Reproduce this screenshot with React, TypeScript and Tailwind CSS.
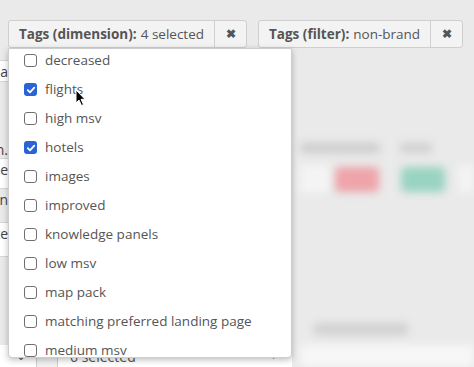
import React from "react";

const tags = [
  {label: "decreased", checked: false},
  {label: "flights", checked: true},
  {label: "high msv", checked: false},
  {label: "hotels", checked: true},
  {label: "images", checked: false},
  {label: "improved", checked: false},
  {label: "knowledge panels", checked: false},
  {label: "low msv", checked: false},
  {label: "map pack", checked: false},
  {label: "matching preferred landing page", checked: false},
  {label: "medium msv", checked: false},
  {label: "navigational", checked: false},
];

function Pill({name, value}: {name: string; value: string}) {
  return (
    <div className="flex h-[28px] items-stretch rounded-[3px] border border-[#cfcfcf] bg-[#f3f3f3] text-[13.5px] text-[#555]">
      <div className="flex items-center pl-[10px] pr-[10px] whitespace-nowrap">
        <span className="font-bold">{name}</span>
        <span className="ml-[4px]">{value}</span>
      </div>
      <div className="flex w-[32px] items-center justify-center border-l border-[#cfcfcf] text-[12px] font-bold">✖</div>
    </div>
  );
}

function Checkbox({checked}: {checked: boolean}) {
  if (checked) {
    return (
      <div className="flex h-[13px] w-[13px] items-center justify-center rounded-[3px] bg-[#2a63d6]">
        <svg width="10" height="10" viewBox="0 0 10 10">
          <path d="M1.8 5.2 L4 7.4 L8.3 2.6" fill="none" stroke="white" strokeWidth="1.8" strokeLinecap="round" strokeLinejoin="round"/>
        </svg>
      </div>
    );
  }
  return <div className="h-[13px] w-[13px] rounded-[3px] border border-[#6f6f6f] bg-white"/>;
}

function Edge({text, white}: {text: string; white?: boolean}) {
  return (
    <div className={`flex h-full w-[8px] justify-end overflow-hidden whitespace-nowrap text-[14px] text-[#444] ${white ? "bg-white" : ""}`}>
      <span>{text}</span>
    </div>
  );
}

export default function App() {
  return (
    <div className="relative h-[367px] w-[474px] overflow-hidden bg-[#eaeaea] font-['Open_Sans',sans-serif]">
      <div className="flex gap-[11px] px-[8px] pt-[20px]">
        <Pill name="Tags (dimension):" value="4 selected"/>
        <Pill name="Tags (filter):" value="non-brand"/>
      </div>

      <div className="flex h-[319px]">
        {/* form column underneath the menu */}
        <div className="flex w-[292px] flex-col">
          <div className="h-[12px]"/>
          <div className="flex h-[22px] items-center border-y border-[#d6d6d6] bg-white"><Edge text="a"/></div>
          <div className="h-[57px]"/>
          <div className="flex h-[20px] items-center border-b border-[#d6d6d6]"><Edge text="Domain."/></div>
          <div className="flex h-[30px] items-center border-b border-[#d6d6d6] bg-white"><Edge text="Type"/></div>
          <div className="flex h-[34px] items-center border-b border-[#d6d6d6]"><Edge text="Brown"/></div>
          <div className="flex h-[34px] items-center border-b border-[#d6d6d6] bg-white"><Edge text="Date"/></div>
          <div className="flex-1"/>
          <div className="flex h-[22px] items-center bg-white pl-[16px] text-[14px] text-[#555]">
            <span className="w-[20px] text-[12px]">⌄</span>
            <div className="h-[22px] w-[22px] border-x border-[#cfcfcf] bg-[#f1f1f1]"/>
            <span className="ml-[12px] flex-1">6 selected</span>
            <span className="mr-[14px] text-[9px]">▼</span>
          </div>
        </div>

        {/* blurred page content to the right */}
        <div className="flex flex-1 flex-col pl-[8px] blur-[4px]">
          <div className="h-[95px]"/>
          <div className="flex h-[10px] gap-[20px]">
            <div className="w-[80px] rounded-[3px] bg-[#cdcdcd]"/>
            <div className="w-[32px] rounded-[3px] bg-[#d0d0d0]"/>
          </div>
          <div className="mt-[12px] flex h-[28px] items-center gap-[5px]">
            <div className="h-full w-[30px] bg-[#f4f4f4]"/>
            <div className="h-[25px] w-[44px] rounded-[4px] bg-[#eea4a9]"/>
            <div className="w-[12px]"/>
            <div className="h-[25px] w-[44px] rounded-[4px] bg-[#99d3c1]"/>
            <div className="ml-[8px] h-full flex-1 bg-[#f4f4f4]"/>
          </div>
          <div className="h-[130px]"/>
          <div className="ml-[14px] h-[12px] w-[94px] rounded-[3px] bg-[#d1d1d1]"/>
          <div className="mt-[10px] flex-1 bg-[#f7f7f7]"/>
        </div>
      </div>

      {/* open tag menu */}
      <div className="absolute left-[8px] top-[48px] h-[310px] w-[284px] overflow-hidden rounded-b-[4px] border border-[#cdcdcd] bg-white shadow-[0_2px_6px_rgba(0,0,0,0.25)]">
        <div className="-mt-[3px] flex flex-col">
          {tags.map((t) => (
            <div key={t.label} className="flex h-[29px] items-center gap-[8px] pl-[15px] text-[13.5px] text-[#555]">
              <Checkbox checked={t.checked}/>
              <span className="whitespace-nowrap">{t.label}</span>
            </div>
          ))}
        </div>
      </div>

      {/* mouse pointer */}
      <svg className="absolute left-[75px] top-[89px]" width="12" height="18" viewBox="0 0 12 18">
        <path d="M1 1 L1 14 L4 11 L6.5 16.5 L8.5 15.6 L6 10.3 L10 10.3 Z" fill="black" stroke="white" strokeWidth="1"/>
      </svg>
    </div>
  );
}
